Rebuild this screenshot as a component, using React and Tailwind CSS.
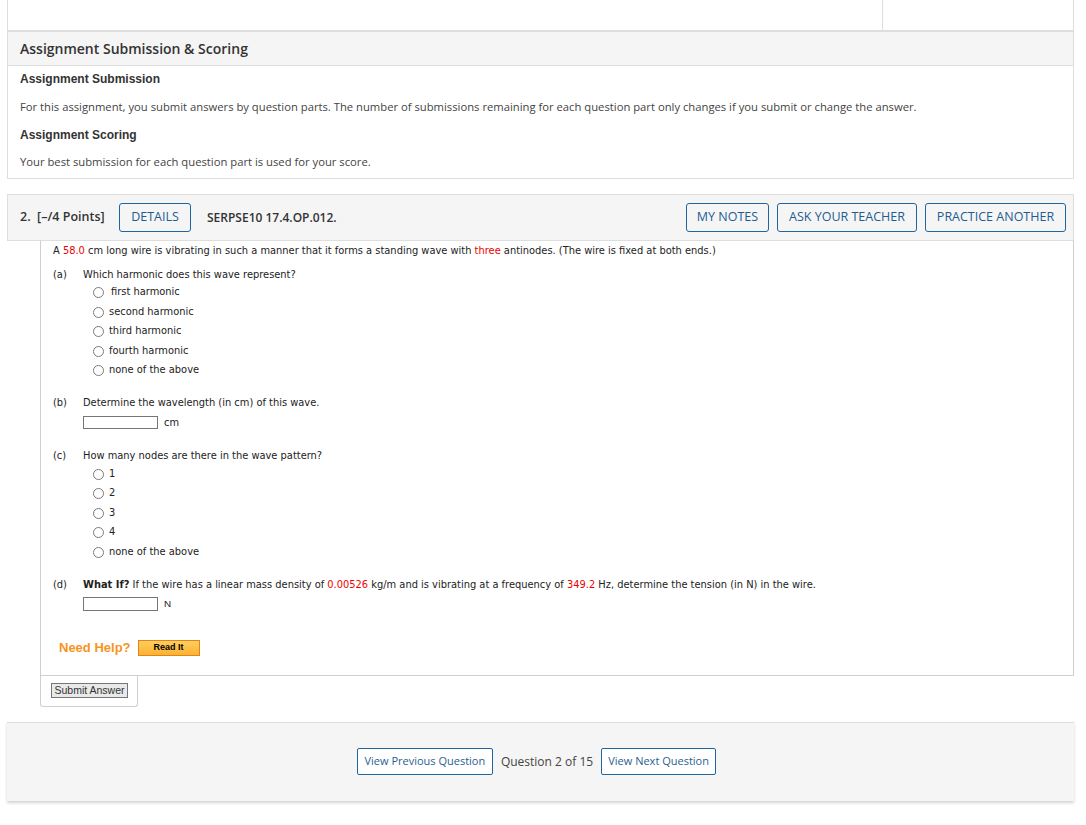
import React from "react";

const OS = { fontFamily: '"Open Sans", "Liberation Sans", sans-serif' };
const AR = { fontFamily: '"Liberation Sans", Arial, sans-serif' };
const VD = { fontFamily: '"DejaVu Sans", Verdana, sans-serif' };

function Radio({ label, lead }) {
  return (
    <div className="flex items-center h-[19.5px] pl-[40px]">
      <span className="w-[11px] h-[11px] rounded-full border border-[#7a7a7a] bg-white shrink-0" />
      <span className={lead ? "ml-[7px]" : "ml-[5px]"}>{label}</span>
    </div>
  );
}

function TopBtn({ children, w }) {
  return (
    <button
      className={`h-[29px] ${w} border border-[#1f66a0] rounded-[3px] text-[12.5px] text-[#1c5d92] flex items-center justify-center`}
      style={OS}
    >
      {children}
    </button>
  );
}

export default function App() {
  return (
    <div className="bg-white min-h-[825px] w-[1086px] pl-[7px] text-[#333]">
      <div className="w-[1067px]">
        {/* top box */}
        <div className="h-[32px] flex border-x border-b-2 border-[#dedede]">
          <div className="w-[875px] border-r border-[#dedede]" />
          <div className="flex-1" />
        </div>

        {/* assignment submission section */}
        <div className="border-x border-b border-[#dedede]">
          <div className="h-[34px] bg-[#f5f5f5] border-b border-[#dedede] flex items-center px-3">
            <span className="text-[14px] font-semibold text-[#333]" style={OS}>
              Assignment Submission &amp; Scoring
            </span>
          </div>
          <div className="px-3 pt-[2px]">
            <div className="h-[22px] flex items-center text-[12px] font-bold text-[#333]" style={AR}>
              Assignment Submission
            </div>
            <div className="h-[34px] flex items-center text-[11.25px] text-[#444]" style={OS}>
              For this assignment, you submit answers by question parts. The number of submissions remaining for each question part only changes if you submit or change the answer.
            </div>
            <div className="h-[22px] flex items-center text-[12px] font-bold text-[#333]" style={AR}>
              Assignment Scoring
            </div>
            <div className="h-[32px] flex items-center text-[11.25px] text-[#444]" style={OS}>
              Your best submission for each question part is used for your score.
            </div>
          </div>
        </div>

        {/* question header */}
        <div className="mt-[15px] h-[47px] bg-[#f5f5f5] border border-[#dedede] flex items-center pl-3 pr-[7px]">
          <span className="text-[12.5px] font-semibold text-[#333] w-[99px]" style={OS}>
            2.&nbsp; [–/4 Points]
          </span>
          <TopBtn w="w-[72px]">DETAILS</TopBtn>
          <span className="ml-[16px] text-[12px] font-semibold text-[#333]" style={OS}>
            SERPSE10 17.4.OP.012.
          </span>
          <div className="ml-auto flex gap-[8px]">
            <TopBtn w="w-[83px]">MY NOTES</TopBtn>
            <TopBtn w="w-[140px]">ASK YOUR TEACHER</TopBtn>
            <TopBtn w="w-[141px]">PRACTICE ANOTHER</TopBtn>
          </div>
        </div>

        {/* question body */}
        <div className="ml-[33px]">
          <div className="border-l border-r border-b border-[#cfcfcf] pl-3 pt-[3px] text-[9.9px] text-[#222]" style={VD}>
            <div className="h-[14px] flex items-center">
              <span>
                A <span className="text-[#e00]">58.0</span> cm long wire is vibrating in such a manner that it forms a standing wave with{" "}
                <span className="text-[#e00]">three</span> antinodes. (The wire is fixed at both ends.)
              </span>
            </div>

            <div className="mt-[10px] h-[14px] flex items-center">
              <span className="w-[30px]">(a)</span>
              <span>Which harmonic does this wave represent?</span>
            </div>
            <div className="mt-[1px]">
              <Radio label="first harmonic" lead />
              <Radio label="second harmonic" />
              <Radio label="third harmonic" />
              <Radio label="fourth harmonic" />
              <Radio label="none of the above" />
            </div>

            <div className="mt-[16px] h-[14px] flex items-center">
              <span className="w-[30px]">(b)</span>
              <span>Determine the wavelength (in cm) of this wave.</span>
            </div>
            <div className="mt-[5px] flex items-center pl-[30px]">
              <span className="w-[75px] h-[13px] border border-[#767676] bg-white" />
              <span className="ml-[6px]">cm</span>
            </div>

            <div className="mt-[19px] h-[14px] flex items-center">
              <span className="w-[30px]">(c)</span>
              <span>How many nodes are there in the wave pattern?</span>
            </div>
            <div className="mt-[1px]">
              <Radio label="1" />
              <Radio label="2" />
              <Radio label="3" />
              <Radio label="4" />
              <Radio label="none of the above" />
            </div>

            <div className="mt-[17px] h-[14px] flex items-center">
              <span className="w-[30px]">(d)</span>
              <span>
                <b>What If?</b> If the wire has a linear mass density of <span className="text-[#e00]">0.00526</span> kg/m and is vibrating at a frequency of{" "}
                <span className="text-[#e00]">349.2</span> Hz, determine the tension (in N) in the wire.
              </span>
            </div>
            <div className="mt-[4px] flex items-center pl-[30px]">
              <span className="w-[75px] h-[14px] border border-[#767676] bg-white" />
              <span className="ml-[6px]" style={AR}>N</span>
            </div>

            <div className="mt-[27px] pl-[6px] flex items-center h-[18px]">
              <span className="text-[13px] font-bold text-[#f7931e]" style={AR}>Need Help?</span>
              <span
                className="ml-[7px] w-[62px] h-[16px] border border-[#e0831a] bg-gradient-to-b from-[#ffce5c] to-[#fbb230] flex items-center justify-center text-[9px] font-bold text-black"
                style={AR}
              >
                Read It
              </span>
            </div>
            <div className="h-[18px]" />
          </div>

          {/* submit box */}
          <div className="w-[98px] h-[31px] border-l border-r border-b border-[#cfcfcf] rounded-b-[3px] flex items-center pl-[10px]">
            <span
              className="w-[77px] h-[15px] border border-[#767676] bg-[#e9e9e9] text-[10.5px] text-[#333] flex items-center justify-center"
              style={AR}
            >
              Submit Answer
            </span>
          </div>
        </div>

        {/* bottom nav */}
        <div className="mt-[15px] h-[79px] bg-[#f5f5f5] border-t border-[#dedede] shadow-[0_2px_3px_rgba(0,0,0,0.18)] flex items-center justify-center gap-[8px] pr-[8px]">
          <button className="h-[27px] w-[136px] bg-white border border-[#1f66a0] rounded-[2px] text-[11px] text-[#2a5f8f]" style={OS}>
            View Previous Question
          </button>
          <span className="text-[12px] text-[#444]" style={OS}>Question 2 of 15</span>
          <button className="h-[27px] w-[115px] bg-white border border-[#1f66a0] rounded-[2px] text-[11px] text-[#2a5f8f]" style={OS}>
            View Next Question
          </button>
        </div>
      </div>
    </div>
  );
}
